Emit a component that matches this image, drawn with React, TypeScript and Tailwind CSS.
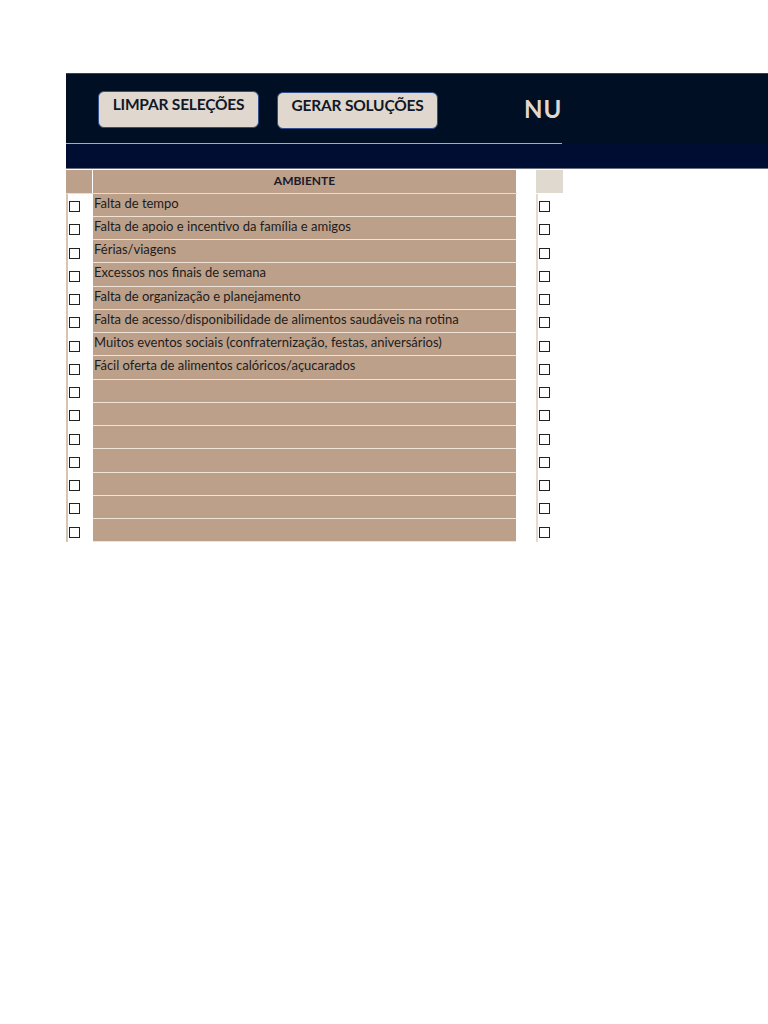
import React from "react";

const items = [
  "Falta de tempo",
  "Falta de apoio e incentivo da família e amigos",
  "Férias/viagens",
  "Excessos nos finais de semana",
  "Falta de organização e planejamento",
  "Falta de acesso/disponibilidade de alimentos saudáveis na rotina",
  "Muitos eventos sociais (confraternização, festas, aniversários)",
  "Fácil oferta de alimentos calóricos/açucarados",
  "",
  "",
  "",
  "",
  "",
  "",
  "",
];

function Box() {
  return <span className="block w-[11px] h-[11px] border border-[#222] bg-white mt-[3px]" />;
}

export default function App() {
  return (
    <div className="min-h-screen bg-white pt-[73px] pl-[66px] font-['Lato','Open_Sans',sans-serif]">
      {/* header */}
      <div className="bg-[#010f24] border-t border-[#3c4350]">
        <div className="flex h-[69px] items-start pt-[17px]">
          <button className="ml-[32px] w-[161px] h-[37px] rounded-[6px] bg-[#e0d8ce] border border-[#2e4f8e] text-[15.5px] font-bold text-[#111827] tracking-[-0.2px] pb-[9px]">
            LIMPAR SELEÇÕES
          </button>
          <button className="ml-[18px] mt-[1px] w-[161px] h-[37px] rounded-[6px] bg-[#e0d8ce] border border-[#2e4f8e] text-[15.5px] font-bold text-[#111827] tracking-[-0.2px] pb-[9px]">
            GERAR SOLUÇÕES
          </button>
          <span className="ml-[86px] mt-[2px] text-[24px] font-bold text-[#e0d8ce] tracking-[1px] leading-none pt-[4px]">
            NU
          </span>
        </div>
        <div className="w-[496px] h-px bg-[#a8abb3]" />
        <div className="h-[25px] bg-[#000d33] border-b border-[#6b7080]" />
      </div>

      {/* table */}
      <div className="flex mt-[1px]">
        <div className="w-[451px]">
          <div className="flex h-[23.5px] border-b border-[#eadccf]">
            <div className="w-[27px] bg-[#bca08a] border-r border-white" />
            <div className="w-[423px] bg-[#bca08a] flex items-center justify-center text-[12px] font-bold text-[#1a1a2a]">
              AMBIENTE
            </div>
          </div>
          {items.map((t, i) => (
            <div key={i} className="flex h-[23.25px]">
              <div className="w-[27px] border-l-2 border-[#d9c3b1] bg-white flex items-center pl-[1px]">
                <Box />
              </div>
              <div className="w-[423px] bg-[#bca08a] border-b border-[#efe3d8] text-[13px] text-[#1c1c1c] pl-[1px] leading-[19px]">
                {t}
              </div>
            </div>
          ))}
        </div>
        <div className="ml-[19px] w-[27px]">
          <div className="h-[23.5px] bg-[#e0d9cf] border-b border-white" />
          {items.map((_, i) => (
            <div key={i} className="h-[23.25px] border-l-2 border-[#e6d8cc] flex items-center pl-[1px]">
              <Box />
            </div>
          ))}
        </div>
      </div>
    </div>
  );
}
